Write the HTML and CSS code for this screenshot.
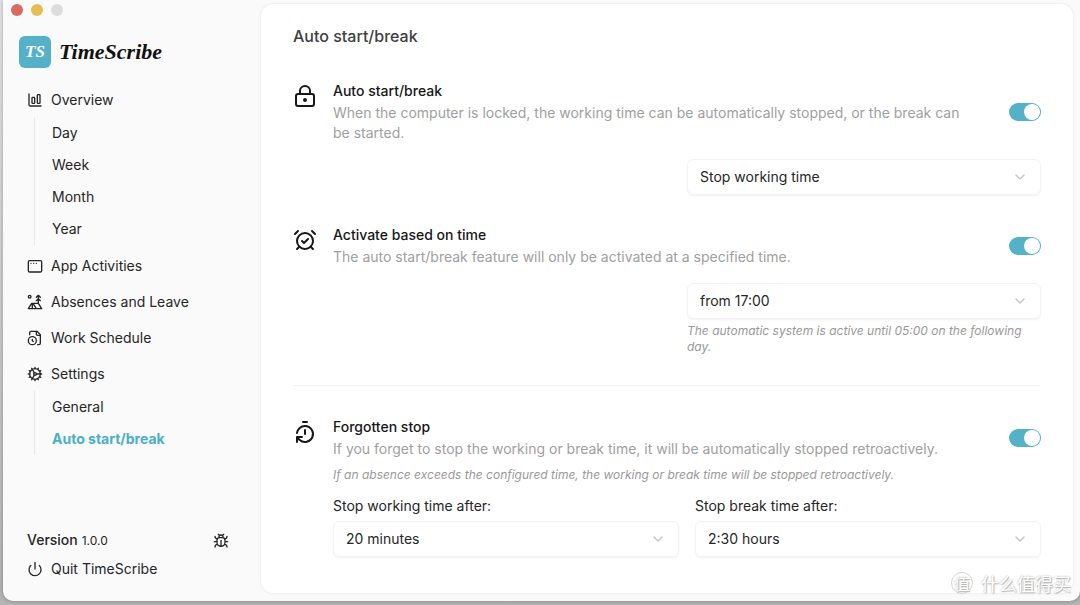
FILE: index.html
```html
<!DOCTYPE html>
<html lang="en">
<head>
  <meta charset="UTF-8" />
  <meta name="viewport" content="width=device-width, initial-scale=1" />
  <title>TimeScribe - Auto start/break</title>
  <link rel="stylesheet" href="styles.css">
</head>
<body>

  <div class="window">
    <aside class="sidebar">
      <div class="traffic-lights">
        <span class="light red"></span>
        <span class="light yellow"></span>
        <span class="light gray"></span>
      </div>

      <div class="brand">
        <span class="brand-badge">TS</span>
        <span class="brand-name">TimeScribe</span>
      </div>

      <nav class="nav">
        <a class="nav-link" href="#overview">
          <svg class="nav-icon" viewBox="0 0 24 24"><path d="M3 3v16a2 2 0 0 0 2 2h16"/><rect x="7.500" y="8" width="4" height="9" rx="1"/><rect x="15.500" y="4" width="4" height="13" rx="1"/></svg>
          Overview
        </a>
        <div class="subnav">
          <a class="sub-link" href="#day">Day</a>
          <a class="sub-link" href="#week">Week</a>
          <a class="sub-link" href="#month">Month</a>
          <a class="sub-link" href="#year">Year</a>
        </div>
        <a class="nav-link" href="#activities">
          <svg class="nav-icon" viewBox="0 0 24 24"><rect x="2" y="4" width="20" height="17" rx="2"/><path d="M6 8h.01M10 8h.01M14 8h.01"/></svg>
          App Activities
        </a>
        <a class="nav-link" href="#absences">
          <svg class="nav-icon" viewBox="0 0 24 24"><circle cx="4" cy="4" r="2"/><path d="m14 5 3-3 3 3M14 10l3-3 3 3M17 14V2M17 14H7l-5 8h20ZM8 14v8M9 14l5 8"/></svg>
          Absences and Leave
        </a>
        <a class="nav-link" href="#schedule">
          <svg class="nav-icon" viewBox="0 0 24 24"><circle cx="8" cy="16" r="6"/><path d="M16 22h2a2 2 0 0 0 2-2V7l-5-5H6a2 2 0 0 0-2 2v3"/><path d="M14 2v4a2 2 0 0 0 2 2h4M8 14v2.200l1.600 1"/></svg>
          Work Schedule
        </a>
        <a class="nav-link" href="#settings">
          <svg class="nav-icon" viewBox="0 0 24 24"><circle cx="12" cy="12" r="8"/><circle cx="12" cy="12" r="2"/><path d="M12 2v2M12 22v-2M17 20.660l-1-1.730M11 10.270 7 3.340M20.660 17l-1.730-1M3.340 7l1.730 1M14 12h8M2 12h2M20.660 7l-1.730 1M3.340 17l1.730-1M17 3.340l-1 1.730M11 13.730l-4 6.930"/></svg>
          Settings
        </a>
        <div class="subnav">
          <a class="sub-link" href="#general">General</a>
          <a class="sub-link active" href="#auto">Auto start/break</a>
        </div>
      </nav>

      <div class="sidebar-footer">
        <div class="version">
          <span><strong>Version</strong> <small>1.0.0</small></span>
          <button class="icon-button" type="button" aria-label="Report a bug">
            <svg class="nav-icon" viewBox="0 0 24 24"><path d="M12 20v-9M14 7a4 4 0 0 1 4 4v3a6 6 0 0 1-12 0v-3a4 4 0 0 1 4-4zM14.120 3.880 16 2M8 2l1.880 1.880M9 7.130V6a3 3 0 1 1 6 0v1.130M21 21a4 4 0 0 0-3.810-4M21 5a4 4 0 0 1-3.550 3.970M22 13h-4M3 21a4 4 0 0 1 3.810-4M3 5a4 4 0 0 0 3.550 3.970M6 13H2"/></svg>
          </button>
        </div>
        <button class="quit" type="button">
          <svg class="nav-icon" viewBox="0 0 24 24"><path d="M12 2v10M18.400 6.600a9 9 0 1 1-12.770.040"/></svg>
          Quit TimeScribe
        </button>
      </div>
    </aside>

    <main class="panel">
      <h1>Auto start/break</h1>

      <section class="setting">
        <svg class="setting-icon" viewBox="0 0 24 24"><circle cx="12" cy="16" r="1"/><rect x="3" y="10" width="18" height="12" rx="2"/><path d="M7 10V7a5 5 0 0 1 10 0v3"/></svg>
        <div class="setting-body">
          <div class="setting-head">
            <div class="setting-text">
              <h2><label for="autoBreak">Auto start/break</label></h2>
              <p>When the computer is locked, the working time can be automatically stopped, or the break can be started.</p>
            </div>
            <input class="switch" type="checkbox" id="autoBreak" checked />
          </div>
          <div class="half">
            <div class="select-box">
              <select aria-label="Action when locked">
                <option>Stop working time</option>
                <option>Start break time</option>
              </select>
              <svg class="chevron" viewBox="0 0 24 24"><path d="m6 9 6 6 6-6"/></svg>
            </div>
          </div>
        </div>
      </section>

      <section class="setting">
        <svg class="setting-icon" viewBox="0 0 24 24"><circle cx="12" cy="13" r="8"/><path d="M5 3 2 6M22 6l-3-3M6.380 18.700 4 21M17.640 18.670 20 21M9 13l2 2 4-4"/></svg>
        <div class="setting-body">
          <div class="setting-head">
            <div class="setting-text">
              <h2><label for="timeBased">Activate based on time</label></h2>
              <p>The auto start/break feature will only be activated at a specified time.</p>
            </div>
            <input class="switch" type="checkbox" id="timeBased" checked />
          </div>
          <div class="half">
            <div class="select-box">
              <select aria-label="Active from">
                <option>from 17:00</option>
                <option>from 18:00</option>
              </select>
              <svg class="chevron" viewBox="0 0 24 24"><path d="m6 9 6 6 6-6"/></svg>
            </div>
            <p class="note">The automatic system is active until 05:00 on the following day.</p>
          </div>
        </div>
      </section>

      <hr class="divider" />

      <section class="setting">
        <svg class="setting-icon" viewBox="0 0 24 24"><path d="M10 2h4M12 14v-4M4 13a8 8 0 0 1 8-7 8 8 0 1 1-5.300 14L4 17.600"/><path d="M9 17H4v5"/></svg>
        <div class="setting-body">
          <div class="setting-head">
            <div class="setting-text">
              <h2><label for="forgottenStop">Forgotten stop</label></h2>
              <p>If you forget to stop the working or break time, it will be automatically stopped retroactively.</p>
            </div>
            <input class="switch" type="checkbox" id="forgottenStop" checked />
          </div>
          <p class="note spaced">If an absence exceeds the configured time, the working or break time will be stopped retroactively.</p>
          <div class="columns">
            <div class="field">
              <label for="stopWork">Stop working time after:</label>
              <div class="select-box">
                <select id="stopWork">
                  <option>20 minutes</option>
                  <option>30 minutes</option>
                </select>
                <svg class="chevron" viewBox="0 0 24 24"><path d="m6 9 6 6 6-6"/></svg>
              </div>
            </div>
            <div class="field">
              <label for="stopBreak">Stop break time after:</label>
              <div class="select-box">
                <select id="stopBreak">
                  <option>2:30 hours</option>
                  <option>3:00 hours</option>
                </select>
                <svg class="chevron" viewBox="0 0 24 24"><path d="m6 9 6 6 6-6"/></svg>
              </div>
            </div>
          </div>
        </div>
      </section>
    </main>
  </div>

  <div class="watermark" lang="zh-CN">
    <span class="watermark-mark">值</span>
    <span>什么值得买</span>
  </div>

</body>
</html>
```
FILE: styles.css
```css
* {
  margin: 0;
  padding: 0;
  box-sizing: border-box;
}
body {
  background: linear-gradient(#e6e6e6, #b4b4b4);
  color: #262626;
  font-family: Inter, "Liberation Sans", sans-serif;
  font-size: 14px;
  line-height: 20px;
  min-height: 100vh;
  display: flex;
  padding: 0 0 4px 3px;
}
a {
  color: inherit;
  text-decoration: none;
}
button, select {
  font: inherit;
  color: inherit;
  border: none;
  background: none;
}
svg {
  fill: none;
  stroke: currentColor;
  stroke-width: 2;
  stroke-linecap: round;
  stroke-linejoin: round;
  flex-shrink: 0;
}

.window {
  flex: 1;
  display: flex;
  background: #fafafa;
  border-radius: 0 0 10px 10px;
  box-shadow: 0 0 4px rgba(0, 0, 0, 0.3);
  padding: 4px 7px 8px 0;
}

/* Sidebar */
.sidebar {
  width: 258px;
  flex-shrink: 0;
  display: flex;
  flex-direction: column;
  padding: 0 16px;
}
.traffic-lights {
  display: flex;
  gap: 8px;
  margin-left: -8px;
}
.light {
  width: 12px;
  height: 12px;
  border-radius: 50%;
}
.red { background: #dd6a60; }
.yellow { background: #e5bd55; }
.gray { background: #dcdcdc; }

.brand {
  display: flex;
  align-items: center;
  gap: 8px;
  margin-top: 20px;
}
.brand-badge {
  width: 32px;
  height: 32px;
  border-radius: 6px;
  background: #54b1c8;
  color: #fff;
  font: italic bold 17px/32px "Liberation Serif", serif;
  text-align: center;
}
.brand-name {
  font: italic bold 22px/32px "Liberation Serif", serif;
  color: #111;
}

.nav {
  display: flex;
  flex-direction: column;
  gap: 4px;
  margin-top: 16px;
}
.nav-link, .quit {
  display: flex;
  align-items: center;
  gap: 8px;
  height: 32px;
  padding: 0 8px;
}
.nav-icon {
  width: 16px;
  height: 16px;
  display: block;
}
.subnav {
  border-left: 1px solid #e8e8e8;
  margin: -3px 0 1px 15px;
  padding-left: 17px;
}
.sub-link {
  display: block;
  line-height: 32px;
}
.sub-link.active {
  color: #4bafc6;
  font-weight: 700;
}

.sidebar-footer {
  margin-top: auto;
  padding-bottom: 8px;
}
.version {
  display: flex;
  align-items: center;
  justify-content: space-between;
  padding: 0 16px 0 8px;
}
.version strong {
  font-weight: 500;
}
.version small {
  font-size: 12px;
}
.quit {
  margin-top: 2px;
}

/* Settings panel */
.panel {
  flex: 1;
  min-width: 0;
  background: #fff;
  border-radius: 12px;
  box-shadow: 0 0 3px rgba(0, 0, 0, 0.1);
  padding: 22px 32px;
}
h1 {
  font-size: 16px;
  font-weight: 500;
  color: #404040;
  margin-bottom: 35px;
}
h2 {
  font-size: 14px;
  font-weight: 500;
  color: #171717;
}
.setting {
  display: flex;
  gap: 16px;
  margin-bottom: 30px;
}
.setting:last-child {
  margin-bottom: 0;
}
.setting-icon {
  width: 24px;
  height: 24px;
  margin-top: 3px;
  color: #171717;
}
.setting-body {
  flex: 1;
  min-width: 0;
}
.setting-head {
  display: flex;
  align-items: center;
  justify-content: space-between;
  gap: 48px;
}
.setting-text p {
  color: #a0a0a0;
  margin-top: 2px;
}
.note {
  color: #999;
  font-size: 12px;
  font-style: italic;
  line-height: 16px;
  margin-top: 4px;
}
.note.spaced {
  margin-top: 8px;
}
.half {
  width: 50%;
  margin: 16px 0 0 auto;
}

.switch {
  appearance: none;
  flex-shrink: 0;
  width: 32px;
  height: 18px;
  border-radius: 9px;
  padding: 1px;
  background: #54b1c8;
  cursor: pointer;
}
.switch::before {
  content: "";
  display: block;
  width: 16px;
  height: 16px;
  border-radius: 50%;
  background: #fff;
}
.switch:checked::before {
  margin-left: auto;
}
.switch:not(:checked) {
  background: #ddd;
}

.select-box {
  display: grid;
  align-items: center;
}
.select-box > * {
  grid-area: 1 / 1;
}
.select-box select {
  appearance: none;
  width: 100%;
  height: 36px;
  padding: 0 32px 0 12px;
  border: 1px solid #f3f3f3;
  border-radius: 6px;
  box-shadow: 0 1px 2px rgba(0, 0, 0, 0.06);
}
.chevron {
  width: 16px;
  height: 16px;
  justify-self: end;
  margin-right: 13px;
  color: #c4c4c4;
  pointer-events: none;
}

.divider {
  border: none;
  border-top: 1px solid #f3f3f3;
  margin-bottom: 31px;
}
.columns {
  display: grid;
  grid-template-columns: 1fr 1fr;
  gap: 16px;
  margin-top: 13px;
}
.field label {
  display: block;
  margin-bottom: 5px;
}

.watermark {
  position: absolute;
  right: 9px;
  bottom: 10px;
  display: flex;
  align-items: center;
  gap: 8px;
  color: #fff;
  font: 18px/24px "Noto Sans CJK SC", sans-serif;
  text-shadow: 0 0 2px #aaa, 1px 1px 1px #bbb;
}
.watermark-mark {
  width: 22px;
  height: 22px;
  border: 1px solid #d4d4d4;
  border-radius: 50%;
  font-size: 16px;
  line-height: 20px;
  text-align: center;
}
```
